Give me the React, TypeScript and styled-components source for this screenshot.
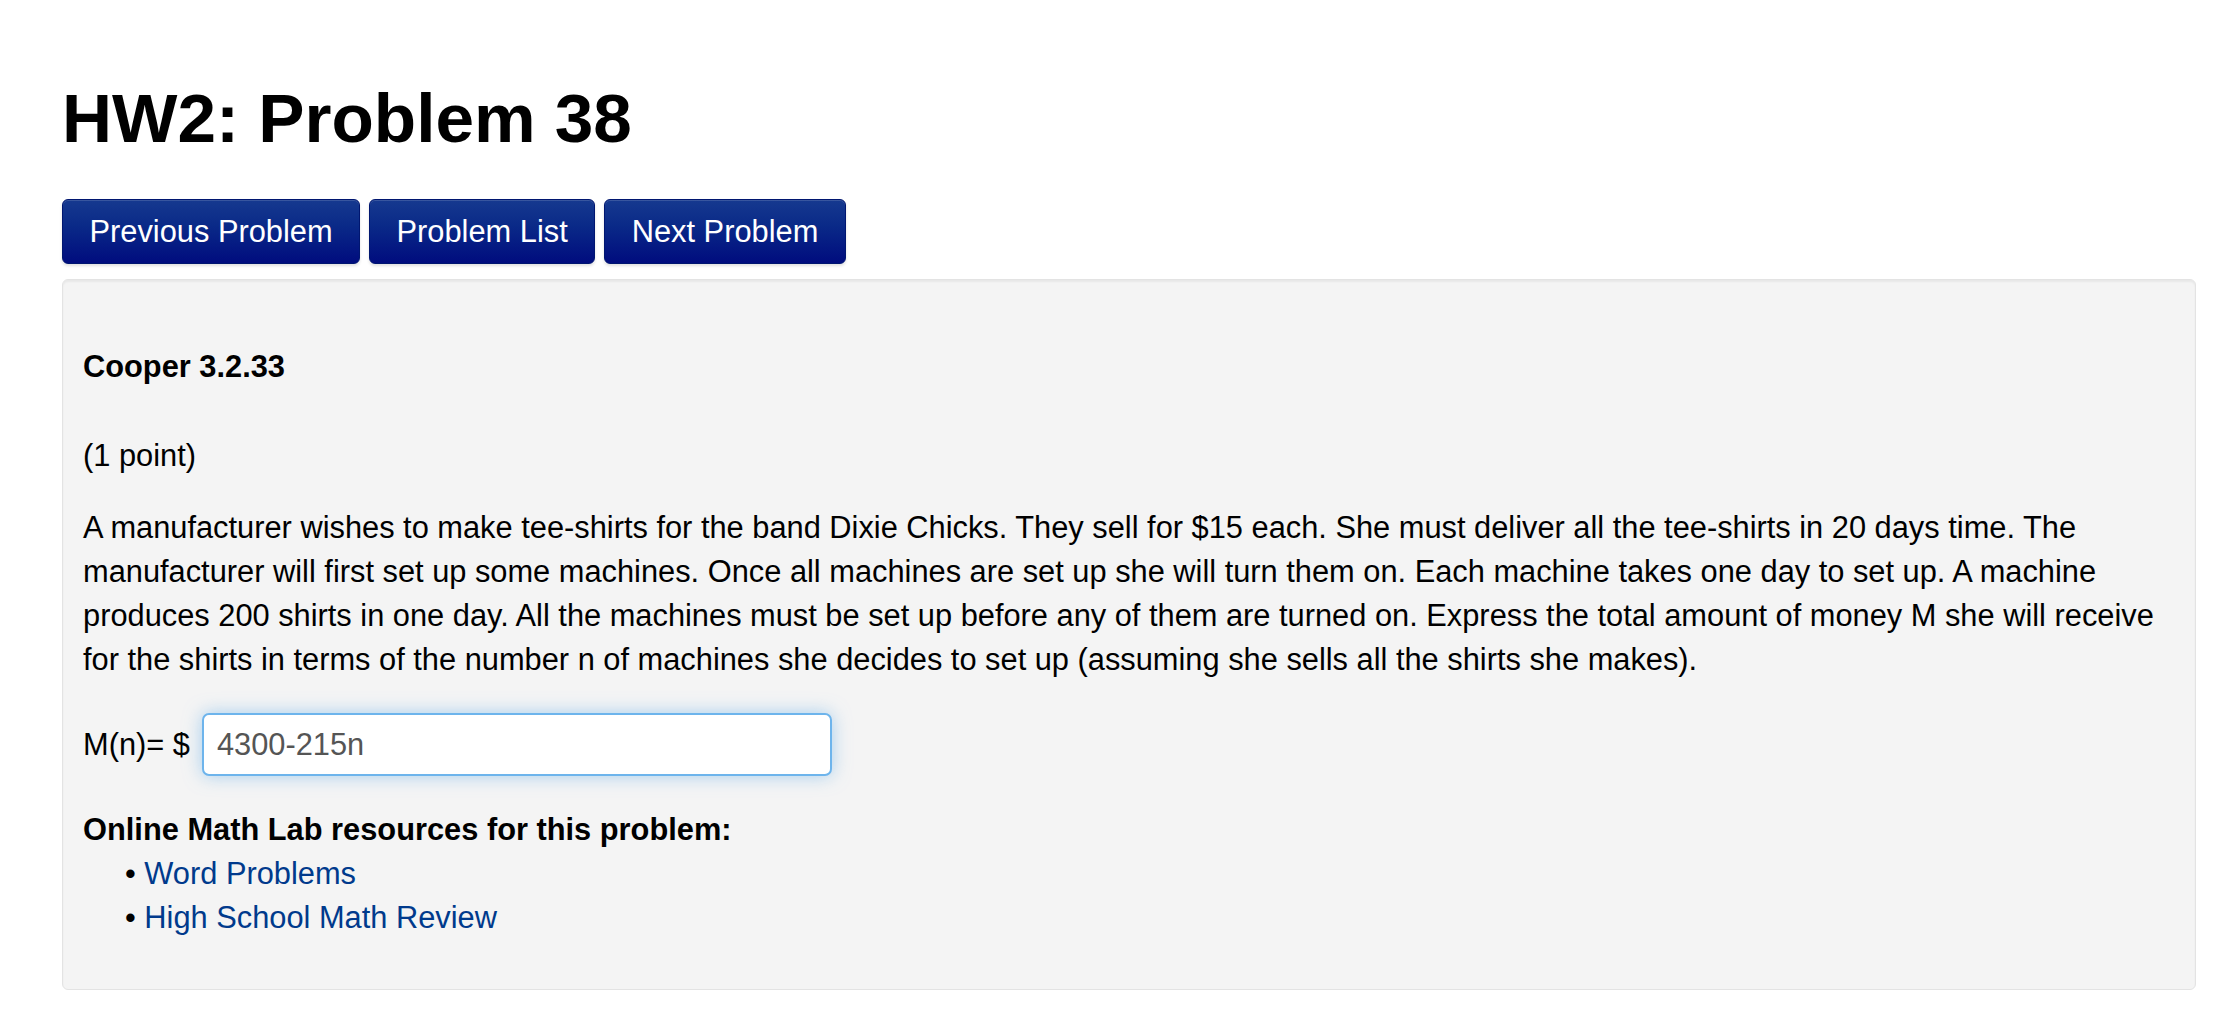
import styled, { createGlobalStyle } from "styled-components";

const GlobalStyle = createGlobalStyle`
  body {
    margin: 0;
    background: #ffffff;
    color: #000000;
    font-family: "Liberation Sans", Helvetica, Arial, sans-serif;
    font-size: 30.8px;
    line-height: 44px;
  }
`;

const Page = styled.main`
  padding: 74px 42px 23px 62px;
`;

const Title = styled.h2`
  margin: 0 0 37px;
  font-size: 69.3px;
  line-height: 88px;
  font-weight: bold;
`;

const NavBar = styled.nav`
  display: flex;
  gap: 9px;
  margin-bottom: 15px;
`;

const NavButton = styled.a`
  display: inline-flex;
  align-items: center;
  height: 65px;
  box-sizing: border-box;
  padding: 0 26.5px;
  border: 1px solid #001670;
  border-radius: 6px;
  background: linear-gradient(to bottom, #16398f 0%, #0a2a88 40%, #000c7e 100%);
  box-shadow: inset 0 1px 0 rgba(255, 255, 255, 0.15), 0 2px 3px rgba(0, 0, 0, 0.12);
  color: #ffffff;
  font-size: 30.8px;
  text-decoration: none;
  cursor: pointer;
`;

const Well = styled.section`
  border: 1px solid #e3e3e3;
  border-radius: 6px;
  background: #f4f4f4;
  box-shadow: inset 0 2px 2px rgba(0, 0, 0, 0.05);
  padding: 65px 20px 49px;
`;

const Heading = styled.div<{ gap?: number }>`
  font-weight: bold;
  margin-bottom: ${(p) => p.gap ?? 0}px;
`;

const Para = styled.p<{ gap: number }>`
  margin: 0 0 ${(p) => p.gap}px;
`;

const AnswerRow = styled.div`
  display: flex;
  align-items: center;
  gap: 12px;
  margin-bottom: 32px;
`;

const AnswerInput = styled.input`
  width: 630px;
  height: 63px;
  box-sizing: border-box;
  padding: 0 13px;
  border: 2px solid #6db4ec;
  border-radius: 7px;
  background: #ffffff;
  box-shadow: 0 0 18px rgba(102, 175, 233, 0.55);
  color: #555555;
  font-family: inherit;
  font-size: 30.8px;
  outline: none;
`;

const ResourceList = styled.ul`
  list-style: none;
  margin: 0;
  padding: 0 0 0 42px;

  li::before {
    content: "• ";
  }
`;

const ResourceLink = styled.a`
  color: #003a8c;
  text-decoration: none;
`;

export default function App() {
  return (
    <>
      <GlobalStyle />
      <Page>
        <Title>HW2: Problem 38</Title>
        <NavBar>
          <NavButton>Previous Problem</NavButton>
          <NavButton>Problem List</NavButton>
          <NavButton>Next Problem</NavButton>
        </NavBar>
        <Well>
          <Heading gap={45}>Cooper 3.2.33</Heading>
          <Para gap={28}>(1 point)</Para>
          <Para gap={31}>
            A manufacturer wishes to make tee-shirts for the band Dixie Chicks. They sell for $15
            each. She must deliver all the tee-shirts in 20 days time. The manufacturer will first
            set up some machines. Once all machines are set up she will turn them on. Each machine
            takes one day to set up. A machine produces 200 shirts in one day. All the machines
            must be set up before any of them are turned on. Express the total amount of money M
            she will receive for the shirts in terms of the number n of machines she decides to set
            up (assuming she sells all the shirts she makes).
          </Para>
          <AnswerRow>
            <span>M(n)= $</span>
            <AnswerInput defaultValue="4300-215n" />
          </AnswerRow>
          <Heading>Online Math Lab resources for this problem:</Heading>
          <ResourceList>
            <li>
              <ResourceLink href="#">Word Problems</ResourceLink>
            </li>
            <li>
              <ResourceLink href="#">High School Math Review</ResourceLink>
            </li>
          </ResourceList>
        </Well>
      </Page>
    </>
  );
}
